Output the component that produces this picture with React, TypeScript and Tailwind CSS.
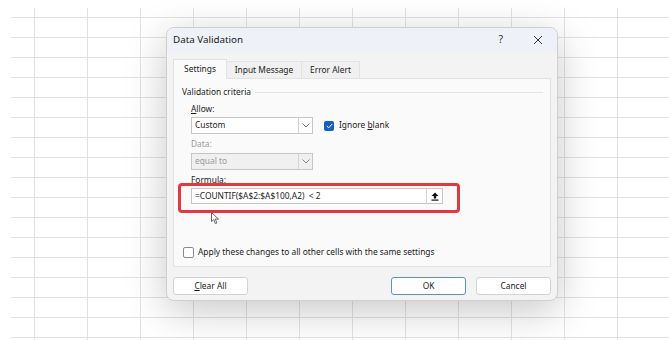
import React from 'react';

const font = { fontFamily: '"Noto Sans", "Liberation Sans", sans-serif' };

const Chevron = () => (
  <svg width="8" height="5" viewBox="0 0 8 5" className="text-gray-500">
    <path d="M0.5 0.5 L4 4 L7.5 0.5" fill="none" stroke="currentColor" strokeWidth="0.9" />
  </svg>
);

const Select = ({ value, disabled }: { value: string; disabled?: boolean }) => (
  <div
    className={[
      'flex h-[17px] w-[122px] items-stretch border border-[#c6c6c6]',
      disabled ? 'bg-[#f0f0f0] text-[#9a9a9a]' : 'bg-white text-[#1b1b1b]',
    ].join(' ')}
  >
    <div className="flex flex-1 items-center pl-[3px]">{value}</div>
    <div className="flex w-[14px] items-center justify-center border-l border-[#d4d4d4]">
      <Chevron />
    </div>
  </div>
);

const Button = ({ children, primary }: { children: React.ReactNode; primary?: boolean }) => (
  <button
    type="button"
    className={[
      'flex h-[18px] w-[75px] items-center justify-center rounded-[3px] bg-white text-[#1b1b1b]',
      primary ? 'border border-[#5a8fd0]' : 'border border-[#d3d3d3]',
    ].join(' ')}
  >
    {children}
  </button>
);

export default function App() {
  return (
    <div className="h-[340px] w-[669px] overflow-hidden bg-white text-[8.4px]" style={font}>
      <div className="ml-[11px] mt-[8px] h-[332px] bg-[image:linear-gradient(to_right,#e2e2e2_1px,transparent_1px),linear-gradient(to_bottom,#e2e2e2_1px,transparent_1px)] bg-[size:53px_20px] bg-[position:23px_9px] pl-[155px] pt-[19px]">
        <div className="flex h-[274px] w-[392px] flex-col overflow-hidden rounded-[8px] border border-[#cfcfcf] bg-[#f3f3f3] shadow-[0_10px_40px_rgba(0,0,0,0.22)]">
          {/* title bar */}
          <div className="flex h-[24px] items-center bg-[#eef1f7] pl-[6px] pr-[14px] text-[9.8px] text-[#1b1b1b]">
            <span className="flex-1">Data Validation</span>
            <span className="mr-[30px] text-[10.5px] text-[#333]">?</span>
            <svg width="10" height="10" viewBox="0 0 10 10">
              <path d="M1 1 L9 9 M9 1 L1 9" stroke="#333" strokeWidth="1" />
            </svg>
          </div>

          <div className="flex flex-1 flex-col px-[6px] pt-[7px]">
            {/* tabs */}
            <div className="relative z-10 flex h-[20px] items-end text-[#1b1b1b]">
              <div className="flex h-[20px] w-[54px] items-center justify-center border border-b-0 border-[#e2e2e2] bg-[#fafafa]">
                Settings
              </div>
              <div className="flex h-[18px] w-[75px] items-center justify-center border-b border-r border-t border-[#e2e2e2] bg-[#f0f0f0]">
                Input Message
              </div>
              <div className="flex h-[18px] w-[58px] items-center justify-center border-b border-r border-t border-[#e2e2e2] bg-[#f0f0f0]">
                Error Alert
              </div>
            </div>

            {/* panel */}
            <div className="relative -mt-px flex h-[189px] w-[378px] flex-col border border-[#e2e2e2] bg-[#fafafa] px-[8px] pt-[7px] text-[#1b1b1b]">
              <div className="flex items-center gap-[4px]">
                <span>Validation criteria</span>
                <div className="mr-[-1px] h-px flex-1 bg-[#e4e4e4]" />
              </div>

              <div className="ml-[9px] mt-[4px] flex flex-col">
                <span>
                  <span className="underline">A</span>llow:
                </span>
                <div className="mt-[2px] flex items-center">
                  <Select value="Custom" />
                  <div className="ml-[11px] flex items-center gap-[5px]">
                    <div className="flex h-[10px] w-[10px] items-center justify-center rounded-[2px] bg-[#1363b8]">
                      <svg width="7" height="6" viewBox="0 0 7 6">
                        <path d="M0.8 3 L2.7 4.8 L6.2 1" fill="none" stroke="white" strokeWidth="1" />
                      </svg>
                    </div>
                    <span>
                      Ignore <span className="underline">b</span>lank
                    </span>
                  </div>
                </div>

                <span className="mt-[4px] text-[#9a9a9a]">Data:</span>
                <div className="mt-[2px]">
                  <Select value="equal to" disabled />
                </div>

                <span className="mt-[4px]">Formula:</span>
                <div className="mt-[2px] flex h-[16px] w-[252px] items-center border border-[#c6c6c6] bg-white">
                  <span className="flex-1 whitespace-pre pl-[3px]">=COUNTIF($A$2:$A$100,A2)  &lt; 2</span>
                  <div className="flex h-full w-[16px] items-center justify-center border-l border-[#d4d4d4]">
                    <svg width="8" height="9" viewBox="0 0 8 9">
                      <path d="M4 0.5 L7.5 4 L5.2 4 L5.2 6.5 L2.8 6.5 L2.8 4 L0.5 4 Z" fill="#111" />
                      <rect x="0.5" y="7.5" width="7" height="1.2" fill="#111" />
                    </svg>
                  </div>
                </div>

                {/* pointer */}
                <svg width="9" height="13" viewBox="0 0 9 13" className="ml-[20px] mt-[8px]">
                  <path d="M0.5 0.5 L0.5 9.5 L2.8 7.6 L4.4 11.6 L5.9 11 L4.3 7.1 L7.5 7.1 Z" fill="white" stroke="#444" strokeWidth="0.8" />
                </svg>
              </div>

              <div className="mt-auto mb-[7px] flex items-center gap-[4px] pl-[1px]">
                <div className="h-[11px] w-[11px] rounded-[2px] border border-[#8a8a8a] bg-white" />
                <span>Apply these changes to all other cells with the same settings</span>
              </div>

              {/* red annotation */}
              <div className="absolute left-[4px] top-[104px] h-[30px] w-[282px] rounded-[4px] border-[3px] border-[#e03a3e]" />
            </div>

            {/* buttons */}
            <div className="mt-[10px] flex items-center">
              <Button>
                <span>
                  <span className="underline">C</span>lear All
                </span>
              </Button>
              <div className="flex-1" />
              <Button primary>OK</Button>
              <div className="w-[10px]" />
              <Button>Cancel</Button>
            </div>
          </div>
        </div>
      </div>
    </div>
  );
}
